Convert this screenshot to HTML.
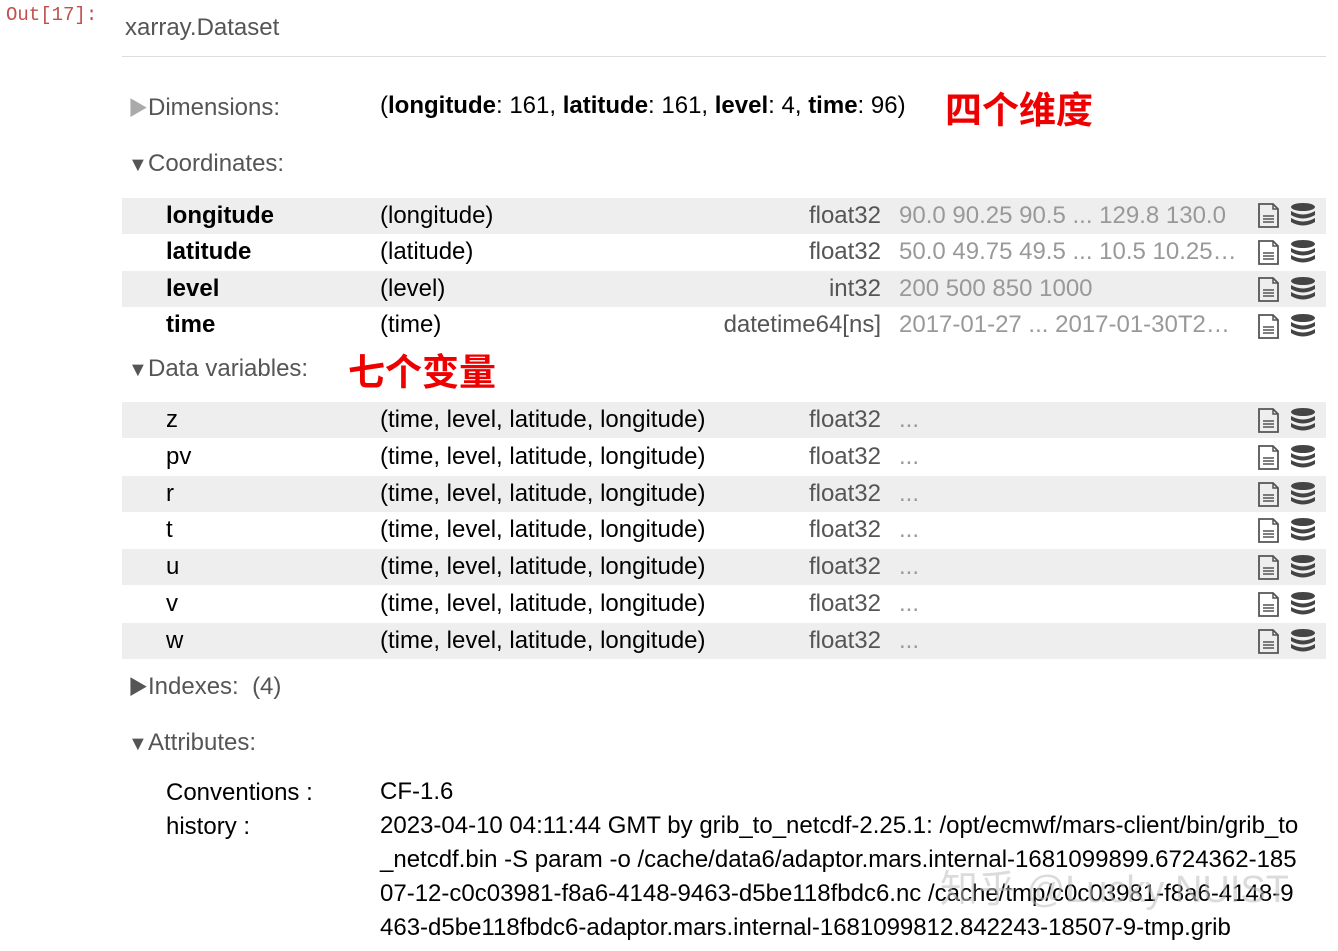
<!DOCTYPE html>
<html><head><meta charset="utf-8"><style>
body{margin:0;width:1338px;height:951px;background:#fff;font-family:"Liberation Sans","Noto Sans CJK SC",sans-serif;position:relative;overflow:hidden;color:#000}
.a{position:absolute;white-space:nowrap}
.out{left:6px;top:4px;font-family:"Liberation Mono",monospace;color:#c0504d;font-size:19px}
.hdr{left:125px;top:14px;font-size:24px;color:#555}
.line{position:absolute;left:122px;top:56px;width:1204px;height:1px;background:#ddd}
.sec{font-size:24px;color:#555;left:128px}
.row{position:absolute;left:122px;width:1204px;height:36px;font-size:24px}
.row.sh{background:#eee}
.row span{position:absolute;top:4px;white-space:nowrap}
.nm{left:44px}
.dm{left:258px}
.dt{right:445px;color:#555}
.pv{left:777px;color:#999}
.red{color:#e00;font-size:37px;font-weight:bold;font-family:"Noto Sans CJK SC",sans-serif}
.attr{font-size:24px;left:380px;line-height:34px}
.tri{font-size:20px;display:inline-block;width:20px}
</style></head><body>
<div class="a out">Out[17]:</div>
<div class="a hdr">xarray.Dataset</div>
<div class="line"></div>
<div class="a sec" style="top:92px"><span class="tri" style="color:#aaa">▶</span>Dimensions:</div>
<div class="a" style="left:380px;top:92px;font-size:24px">(<b>longitude</b>: 161, <b>latitude</b>: 161, <b>level</b>: 4, <b>time</b>: 96)</div>
<div class="a red" style="left:945px;top:80px">四个维度</div>
<div class="a sec" style="top:150px"><span class="tri">▼</span>Coordinates:</div>

<div class="row sh" style="top:198px"><span class="nm"><b>longitude</b></span><span class="dm">(longitude)</span><span class="dt">float32</span><span class="pv">90.0 90.25 90.5 ... 129.8 130.0</span></div>
<div class="row" style="top:234px"><span class="nm"><b>latitude</b></span><span class="dm">(latitude)</span><span class="dt">float32</span><span class="pv">50.0 49.75 49.5 ... 10.5 10.25…</span></div>
<div class="row sh" style="top:271px"><span class="nm"><b>level</b></span><span class="dm">(level)</span><span class="dt">int32</span><span class="pv">200 500 850 1000</span></div>
<div class="row" style="top:307px"><span class="nm"><b>time</b></span><span class="dm">(time)</span><span class="dt">datetime64[ns]</span><span class="pv">2017-01-27 ... 2017-01-30T2…</span></div>

<div class="a sec" style="top:355px"><span class="tri">▼</span>Data variables:</div>
<div class="a red" style="left:348px;top:342px">七个变量</div>

<div class="row sh" style="top:402px"><span class="nm">z</span><span class="dm">(time, level, latitude, longitude)</span><span class="dt">float32</span><span class="pv">...</span></div>
<div class="row" style="top:439px"><span class="nm">pv</span><span class="dm">(time, level, latitude, longitude)</span><span class="dt">float32</span><span class="pv">...</span></div>
<div class="row sh" style="top:476px"><span class="nm">r</span><span class="dm">(time, level, latitude, longitude)</span><span class="dt">float32</span><span class="pv">...</span></div>
<div class="row" style="top:512px"><span class="nm">t</span><span class="dm">(time, level, latitude, longitude)</span><span class="dt">float32</span><span class="pv">...</span></div>
<div class="row sh" style="top:549px"><span class="nm">u</span><span class="dm">(time, level, latitude, longitude)</span><span class="dt">float32</span><span class="pv">...</span></div>
<div class="row" style="top:586px"><span class="nm">v</span><span class="dm">(time, level, latitude, longitude)</span><span class="dt">float32</span><span class="pv">...</span></div>
<div class="row sh" style="top:623px"><span class="nm">w</span><span class="dm">(time, level, latitude, longitude)</span><span class="dt">float32</span><span class="pv">...</span></div>

<svg class="a" style="left:0;top:0" width="1338" height="700">
<defs>
<g id="ic">
<path d="M1 1h14l5 5v18h-19z" fill="none" stroke="#555" stroke-width="1.8"/>
<path d="M15 1v5h5" fill="none" stroke="#555" stroke-width="1.5"/>
<path d="M5 13h11M5 16h11M5 19h11" stroke="#555" stroke-width="1.5"/>
<ellipse cx="45" cy="4" rx="12" ry="4" fill="#444"/>
<path d="M33 8q12 7 24 0v4q-12 7-24 0z M33 15q12 7 24 0v4q-12 7-24 0z" fill="#444"/>
</g>
</defs>
<use href="#ic" x="1258" y="203"/><use href="#ic" x="1258" y="240"/><use href="#ic" x="1258" y="277"/><use href="#ic" x="1258" y="314"/>
<use href="#ic" x="1258" y="408"/><use href="#ic" x="1258" y="445"/><use href="#ic" x="1258" y="482"/><use href="#ic" x="1258" y="518"/><use href="#ic" x="1258" y="555"/><use href="#ic" x="1258" y="592"/><use href="#ic" x="1258" y="629"/>
</svg>

<div class="a sec" style="top:671px"><span class="tri">▶</span>Indexes:&nbsp;&nbsp;(4)</div>
<div class="a sec" style="top:729px"><span class="tri">▼</span>Attributes:</div>
<div class="a" style="left:166px;top:779px;font-size:24px">Conventions :</div>
<div class="a" style="left:166px;top:813px;font-size:24px">history :</div>
<div class="a attr" style="top:775px">CF-1.6<br>2023-04-10 04:11:44 GMT by grib_to_netcdf-2.25.1: /opt/ecmwf/mars-client/bin/grib_to<br>_netcdf.bin -S param -o /cache/data6/adaptor.mars.internal-1681099899.6724362-185<br>07-12-c0c03981-f8a6-4148-9463-d5be118fbdc6.nc /cache/tmp/c0c03981-f8a6-4148-9<br>463-d5be118fbdc6-adaptor.mars.internal-1681099812.842243-18507-9-tmp.grib</div>
<div class="a" style="left:940px;top:858px;font-size:38px;color:rgba(190,190,190,0.55)">知乎 @Lucky NUIST</div>
</body></html>
